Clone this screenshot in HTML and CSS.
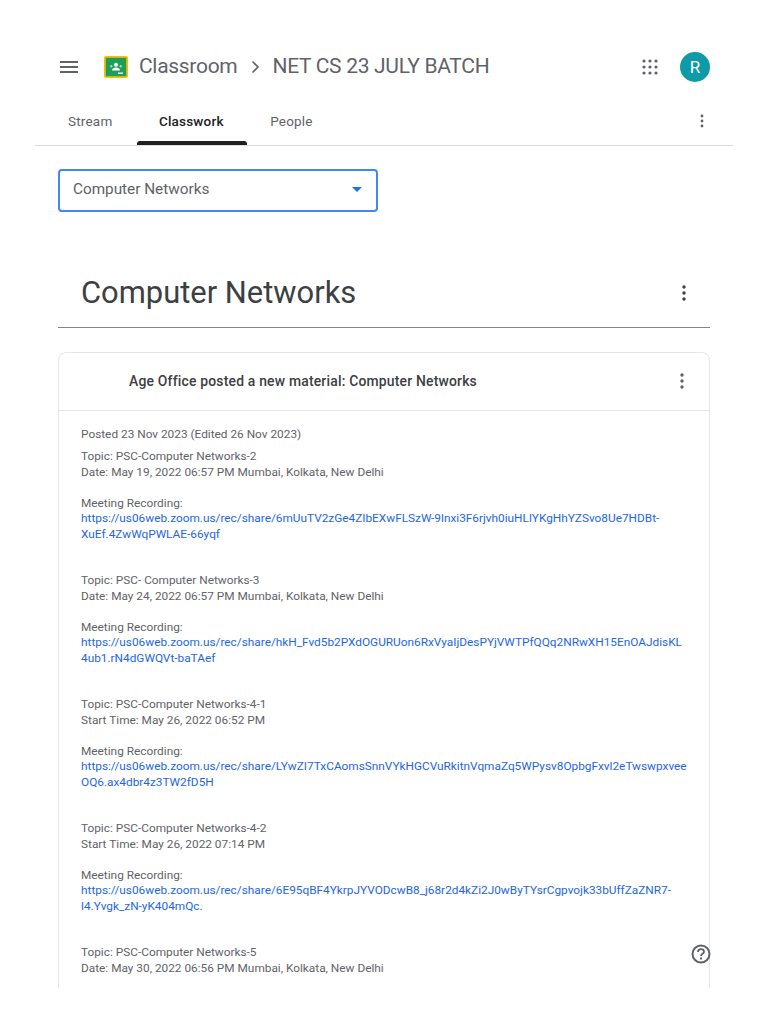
FILE: index.html
```html
<!DOCTYPE html>
<html lang="en">
<head>
<meta charset="utf-8">
<title>Computer Networks</title>
<link rel="stylesheet" href="styles.css">
</head>
<body>
<div class="page">
  <header class="topbar">
    <svg class="menu" width="18" height="12" viewBox="0 0 18 12"><path d="M0 0h18v2H0zM0 5h18v2H0zM0 10h18v2H0z" fill="#5f6368"/></svg>
    <svg class="logo" width="24" height="22" viewBox="0 0 24 22">
      <rect width="24" height="22" rx="2" fill="#fbbc04"/>
      <rect x="1.800" y="1.800" width="20.400" height="18.400" fill="#1e9e5a"/>
      <circle cx="12" cy="8.800" r="2" fill="#fff"/>
      <path d="M8 14.500c0-2 2-3 4-3s4 1 4 3z" fill="#fff"/>
      <circle cx="7.300" cy="10.200" r="1.200" fill="#a8dab5"/>
      <circle cx="16.700" cy="10.200" r="1.200" fill="#a8dab5"/>
      <rect x="14" y="16.500" width="5" height="1.300" fill="#fff"/>
    </svg>
    <span class="crumb">Classroom</span>
    <svg class="chev" width="9" height="14" viewBox="0 0 9 14"><path d="M1.500 1.500 7 7l-5.500 5.500" fill="none" stroke="#5f6368" stroke-width="1.600"/></svg>
    <span class="crumb">NET CS 23 JULY BATCH</span>
    <svg class="apps" width="16" height="16" viewBox="0 0 16 16" fill="#5f6368">
      <circle cx="2" cy="2" r="1.600"/><circle cx="8" cy="2" r="1.600"/><circle cx="14" cy="2" r="1.600"/>
      <circle cx="2" cy="8" r="1.600"/><circle cx="8" cy="8" r="1.600"/><circle cx="14" cy="8" r="1.600"/>
      <circle cx="2" cy="14" r="1.600"/><circle cx="8" cy="14" r="1.600"/><circle cx="14" cy="14" r="1.600"/>
    </svg>
    <span class="avatar">R</span>
  </header>

  <nav class="tabs">
    <a class="tab">Stream</a>
    <a class="tab tab-active">Classwork</a>
    <a class="tab">People</a>
    <svg class="tabs-more" width="4" height="14" viewBox="0 0 4 14" fill="#5f6368"><circle cx="2" cy="2" r="1.400"/><circle cx="2" cy="7" r="1.400"/><circle cx="2" cy="12" r="1.400"/></svg>
  </nav>

  <div class="select">
    <span>Computer Networks</span>
    <svg width="10" height="5" viewBox="0 0 10 5"><path d="M0 0h10L5 5z" fill="#1a73e8"/></svg>
  </div>

  <section class="topic">
    <div class="topic-head">
      <h1>Computer Networks</h1>
      <svg width="4" height="16" viewBox="0 0 4 16" fill="#3c4043"><circle cx="2" cy="2" r="1.700"/><circle cx="2" cy="8" r="1.700"/><circle cx="2" cy="14" r="1.700"/></svg>
    </div>

    <article class="card">
      <div class="card-head">
        <h2>Age Office posted a new material: Computer Networks</h2>
        <svg width="4" height="16" viewBox="0 0 4 16" fill="#5f6368"><circle cx="2" cy="2" r="1.700"/><circle cx="2" cy="8" r="1.700"/><circle cx="2" cy="14" r="1.700"/></svg>
      </div>
      <div class="card-body">
        <p class="posted">Posted 23 Nov 2023 (Edited 26 Nov 2023)</p>

        <p class="gap1">Topic: PSC-Computer Networks-2<br>Date: May 19, 2022 06:57 PM Mumbai, Kolkata, New Delhi</p>
        <p class="gap2">Meeting Recording:<br><a>https://us06web.zoom.us/rec/share/6mUuTV2zGe4ZIbEXwFLSzW-9lnxi3F6rjvh0iuHLlYKgHhYZSvo8Ue7HDBt-<br>XuEf.4ZwWqPWLAE-66yqf</a></p>

        <p class="gap1">Topic: PSC- Computer Networks-3<br>Date: May 24, 2022 06:57 PM Mumbai, Kolkata, New Delhi</p>
        <p class="gap2">Meeting Recording:<br><a>https://us06web.zoom.us/rec/share/hkH_Fvd5b2PXdOGURUon6RxVyaIjDesPYjVWTPfQQq2NRwXH15EnOAJdisKL<br>4ub1.rN4dGWQVt-baTAef</a></p>

        <p class="gap1">Topic: PSC-Computer Networks-4-1<br>Start Time: May 26, 2022 06:52 PM</p>
        <p class="gap2">Meeting Recording:<br><a>https://us06web.zoom.us/rec/share/LYwZI7TxCAomsSnnVYkHGCVuRkitnVqmaZq5WPysv8OpbgFxvl2eTwswpxvee<br>OQ6.ax4dbr4z3TW2fD5H</a></p>

        <p class="gap1">Topic: PSC-Computer Networks-4-2<br>Start Time: May 26, 2022 07:14 PM</p>
        <p class="gap2">Meeting Recording:<br><a>https://us06web.zoom.us/rec/share/6E95qBF4YkrpJYVODcwB8_j68r2d4kZi2J0wByTYsrCgpvojk33bUffZaZNR7-<br>l4.Yvgk_zN-yK404mQc.</a></p>

        <p class="gap1">Topic: PSC-Computer Networks-5<br>Date: May 30, 2022 06:56 PM Mumbai, Kolkata, New Delhi</p>
      </div>
    </article>
  </section>

  <svg class="help" width="20" height="20" viewBox="0 0 20 20">
    <circle cx="10" cy="10" r="8.500" fill="#fff" stroke="#5f6368" stroke-width="2"/>
    <path d="M7 8c0-1.800 1.300-2.800 3-2.800s3 1 3 2.500c0 2-3 2.200-3 4.300" fill="none" stroke="#5f6368" stroke-width="1.800"/>
    <rect x="9" y="13.500" width="2" height="2" fill="#5f6368"/>
  </svg>
</div>
</body>
</html>
```

FILE: styles.css
```css
* { box-sizing: border-box; }
html, body { margin: 0; padding: 0; background: #fff; }
body { font-family: Roboto, "Liberation Sans", sans-serif; color: #5f6368; }

.page {
  position: relative;
  width: 768px;
  height: 988px;
  overflow: hidden;
  padding: 0 58px;
}

.topbar {
  display: flex;
  align-items: center;
  height: 40px;
  margin-top: 47px;
  margin-left: 2px;
}
.menu { flex: none; margin-right: 26px; }
.logo { flex: none; margin-right: 11px; }
.crumb { font-size: 21px; line-height: 38px; margin-bottom: 2px; color: #5f6368; letter-spacing: -.3px; white-space: nowrap; }
.chev { flex: none; margin: 0 12px 0 14px; }
.apps { flex: none; margin-left: auto; margin-right: 22px; }
.avatar {
  flex: none;
  width: 30px;
  height: 30px;
  border-radius: 50%;
  background: #0e9aa7;
  color: #fff;
  font-size: 17px;
  display: flex;
  align-items: center;
  justify-content: center;
}

.tabs {
  display: flex;
  align-items: center;
  gap: 46.5px;
  height: 59px;
  margin: 0 -23px;
  padding: 10px 29px 0 33px;
  border-bottom: 1px solid #dadce0;
}
.tab {
  position: relative;
  font-size: 13.5px;
  line-height: 20px;
  color: #5f6368;
  letter-spacing: .2px;
}
.tab-active { color: #202124; font-weight: 500; }
.tab-active::after {
  content: "";
  position: absolute;
  left: -22px;
  right: -23px;
  bottom: -14px;
  height: 4px;
  border-radius: 3px 3px 0 0;
  background: #202124;
}
.tabs-more { margin-left: auto; }

.select {
  display: flex;
  align-items: center;
  justify-content: space-between;
  width: 320px;
  height: 43px;
  margin-top: 23px;
  padding: 0 14px 3px 13px;
  border: 2px solid #4285f4;
  border-radius: 4px;
  font-size: 15.3px;
  color: #5f6368;
}

.topic { margin-top: 58px; }
.topic-head {
  display: flex;
  align-items: center;
  justify-content: space-between;
  height: 58px;
  padding: 0 24px 0 23px;
  border-bottom: 1px solid #80868b;
}
h1 { margin: -12px 0 0; font-size: 30.9px; font-weight: 400; color: #3c4043; }
.topic-head svg { margin-top: -12px; }

.card {
  margin-top: 24px;
  border: 1px solid #e3e5e8;
  border-radius: 8px 8px 0 0;
  height: 700px;
}
.card-head {
  display: flex;
  align-items: center;
  justify-content: space-between;
  height: 58px;
  padding: 0 25px 2px 70px;
  border-bottom: 1px solid #e3e5e8;
}
h2 { margin: 0; font-size: 13.9px; font-weight: 500; color: #3c4043; letter-spacing: .2px; }

.card-body {
  padding: 15.7px 22px 0;
  font-size: 11.84px;
  line-height: 15.5px;
  white-space: nowrap;
}
.card-body p { margin: 0; }
.card-body .posted { margin-bottom: 7px; }
.card-body .gap1 { margin-bottom: 15.5px; }
.card-body .gap2 { margin-bottom: 31px; }
.card-body a { color: #1f66e5; }

.help { position: absolute; left: 691px; top: 944px; }
```
